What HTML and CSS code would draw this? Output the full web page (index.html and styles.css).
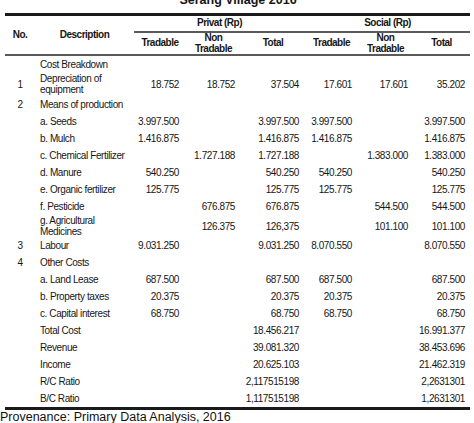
FILE: index.html
```html
<!DOCTYPE html>
<html>
<head>
<meta charset="utf-8">
<link rel="stylesheet" href="styles.css">
</head>
<body>
<div class="page">
  <div class="title">Serang Village 2016</div>
  <table class="t">
    <colgroup>
      <col class="c-no"><col class="c-desc"><col class="c-pt"><col class="c-pnt"><col class="c-ptot"><col class="c-st"><col class="c-snt"><col class="c-stot">
    </colgroup>
    <thead>
      <tr class="h1">
        <th rowspan="2" class="hb">No.</th>
        <th rowspan="2" class="hb">Description</th>
        <th colspan="3" class="grp">Privat (Rp)</th>
        <th colspan="3" class="grp">Social (Rp)</th>
      </tr>
      <tr class="h2">
        <th class="hb">Tradable</th><th class="hb">Non<br>Tradable</th><th class="hb">Total</th>
        <th class="hb">Tradable</th><th class="hb">Non<br>Tradable</th><th class="hb">Total</th>
      </tr>
    </thead>
    <tbody>
      <tr><td></td><td>Cost Breakdown</td><td></td><td></td><td></td><td></td><td></td><td></td></tr>
      <tr class="r22"><td>1</td><td>Depreciation of<br>equipment</td><td>18.752</td><td>18.752</td><td>37.504</td><td>17.601</td><td>17.601</td><td>35.202</td></tr>
      <tr class="r18"><td>2</td><td>Means of production</td><td></td><td></td><td></td><td></td><td></td><td></td></tr>
      <tr><td></td><td>a. Seeds</td><td>3.997.500</td><td></td><td>3.997.500</td><td>3.997.500</td><td></td><td>3.997.500</td></tr>
      <tr><td></td><td>b. Mulch</td><td>1.416.875</td><td></td><td>1.416.875</td><td>1.416.875</td><td></td><td>1.416.875</td></tr>
      <tr><td></td><td>c. Chemical Fertilizer</td><td></td><td>1.727.188</td><td>1.727.188</td><td></td><td>1.383.000</td><td>1.383.000</td></tr>
      <tr><td></td><td>d. Manure</td><td>540.250</td><td></td><td>540.250</td><td>540.250</td><td></td><td>540.250</td></tr>
      <tr><td></td><td>e. Organic fertilizer</td><td>125.775</td><td></td><td>125.775</td><td>125.775</td><td></td><td>125.775</td></tr>
      <tr><td></td><td>f. Pesticide</td><td></td><td>676.875</td><td>676.875</td><td></td><td>544.500</td><td>544.500</td></tr>
      <tr class="r22"><td></td><td>g. Agricultural<br>Medicines</td><td></td><td>126.375</td><td>126,375</td><td></td><td>101.100</td><td>101.100</td></tr>
      <tr><td>3</td><td>Labour</td><td>9.031.250</td><td></td><td>9.031.250</td><td>8.070.550</td><td></td><td>8.070.550</td></tr>
      <tr><td>4</td><td>Other Costs</td><td></td><td></td><td></td><td></td><td></td><td></td></tr>
      <tr><td></td><td>a. Land Lease</td><td>687.500</td><td></td><td>687.500</td><td>687.500</td><td></td><td>687.500</td></tr>
      <tr><td></td><td>b. Property taxes</td><td>20.375</td><td></td><td>20.375</td><td>20.375</td><td></td><td>20.375</td></tr>
      <tr><td></td><td>c. Capital interest</td><td>68.750</td><td></td><td>68.750</td><td>68.750</td><td></td><td>68.750</td></tr>
      <tr><td></td><td>Total Cost</td><td></td><td></td><td>18.456.217</td><td></td><td></td><td>16.991.377</td></tr>
      <tr><td></td><td>Revenue</td><td></td><td></td><td>39.081.320</td><td></td><td></td><td>38.453.696</td></tr>
      <tr><td></td><td>Income</td><td></td><td></td><td>20.625.103</td><td></td><td></td><td>21.462.319</td></tr>
      <tr><td></td><td>R/C Ratio</td><td></td><td></td><td>2,117515198</td><td></td><td></td><td>2,2631301</td></tr>
      <tr><td></td><td>B/C Ratio</td><td></td><td></td><td>1,117515198</td><td></td><td></td><td>1,2631301</td></tr>
    </tbody>
  </table>
  <div class="source">Provenance: Primary Data Analysis, 2016</div>
</div>
</body>
</html>
```
FILE: styles.css
```css
html, body {
  margin: 0;
  padding: 0;
  background: #ffffff;
}

.page {
  width: 474px;
  font-family: "Liberation Sans", Arial, sans-serif;
  color: #161616;
}

.title {
  margin-top: -7px;
  height: 14px;
  line-height: 14px;
  font-size: 12.5px;
  font-weight: bold;
  text-align: center;
  padding-left: 2px;
}

.t {
  margin: 6px 0 0 5px;
  width: 465px;
  table-layout: fixed;
  border-collapse: separate;
  border-spacing: 0;
  border-top: 3px solid #1a1a1a;
  border-bottom: 3px solid #1a1a1a;
  font-size: 10px;
  letter-spacing: -0.4px;
}

.c-no { width: 30px; }
.c-desc { width: 99px; }
.c-pt { width: 52px; }
.c-pnt { width: 55px; }
.c-ptot { width: 64px; }
.c-st { width: 53px; }
.c-snt { width: 55px; }
.c-stot { width: 57px; }

.t th {
  padding: 0;
  font-weight: bold;
  letter-spacing: -0.5px;
  line-height: 10.5px;
  text-align: center;
  vertical-align: middle;
  color: #161616;
}

.t .h1 { height: 17px; }
.t .h2 { height: 23px; }

.t .grp { border-bottom: 2px solid #5a5a5a; }
.t .hb { border-bottom: 2px solid #5a5a5a; }

.t td {
  padding: 0;
  line-height: 11px;
  vertical-align: middle;
  white-space: nowrap;
  text-align: right;
  padding-right: 6px;
}

.t td:nth-child(1) {
  text-align: center;
  padding-right: 0;
}

.t td:nth-child(2) {
  text-align: left;
  padding-left: 5px;
  padding-right: 0;
}

.t td:nth-child(3) { padding-right: 7px; }
.t td:nth-child(7),
.t td:nth-child(8) { padding-right: 5px; }

.t tbody tr { height: 17px; }
.t tbody tr.r22 { height: 22px; }
.t tbody tr.r18 { height: 18px; }

.source {
  font-size: 12.5px;
  line-height: 15px;
  color: #111;
}
```
